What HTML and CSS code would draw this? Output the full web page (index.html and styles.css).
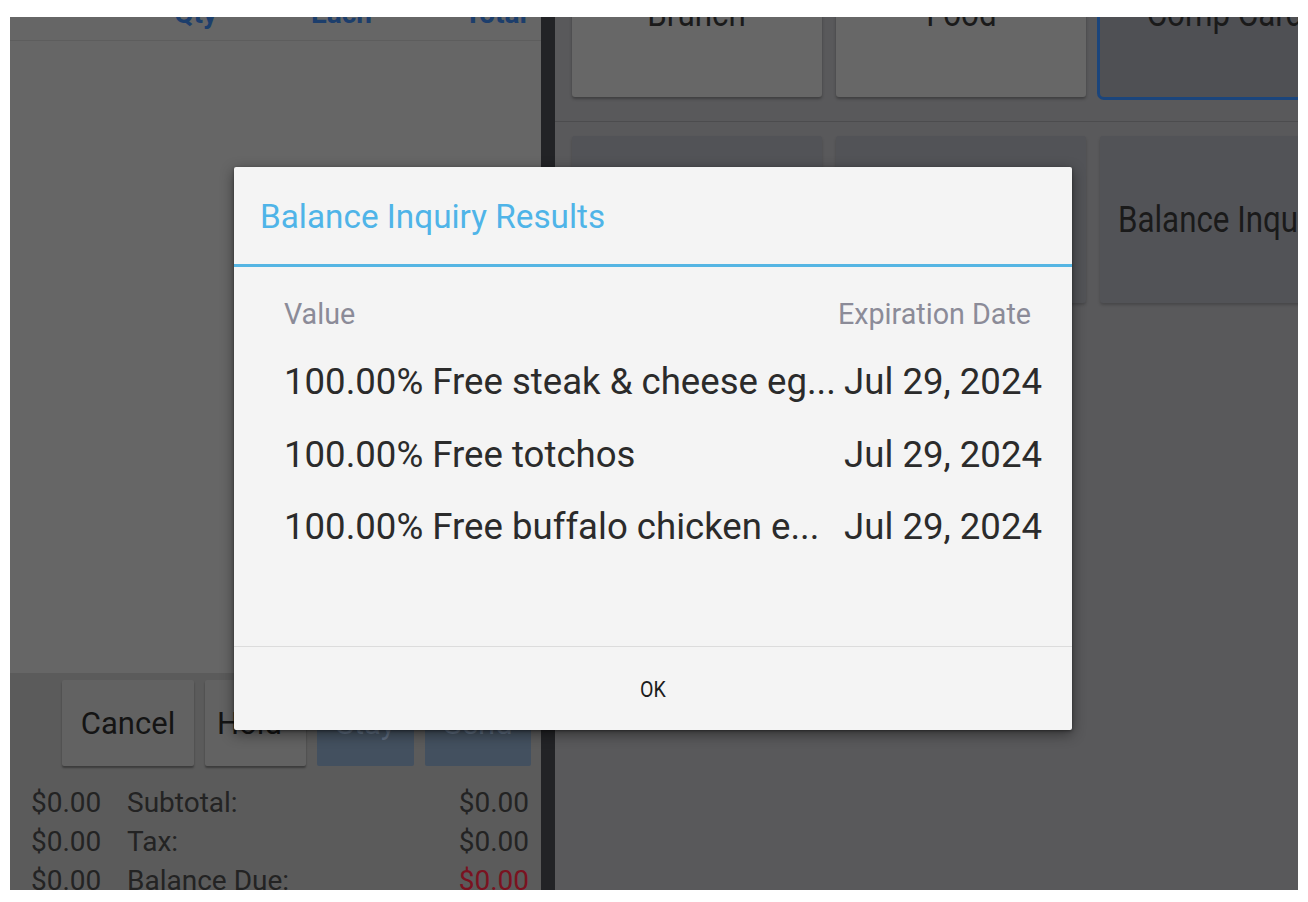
FILE: index.html
```html
<!DOCTYPE html>
<html>
<head>
<meta charset="utf-8">
<link rel="stylesheet" href="styles.css">
</head>
<body>
<div class="screen">
  <section class="order">
    <div class="order-head">
      <span></span><span>Qty</span><span>Each</span><span>Total</span>
    </div>
    <div class="order-items"></div>
    <div class="order-foot">
      <div class="actions">
        <button class="act act-cancel">Cancel</button>
        <button class="act act-hold">Hold</button>
        <button class="act act-blue act-stay">Stay</button>
        <button class="act act-blue act-send">Send</button>
      </div>
      <div class="totals">
        <span>$0.00</span><span>Subtotal:</span><span class="amt">$0.00</span>
        <span>$0.00</span><span>Tax:</span><span class="amt">$0.00</span>
        <span>$0.00</span><span>Balance Due:</span><span class="amt due">$0.00</span>
      </div>
    </div>
  </section>
  <div class="divider"></div>
  <section class="menu">
    <div class="cats">
      <div class="tile tile-cat"><span class="cond">Brunch</span></div>
      <div class="tile tile-cat"><span class="cond">Food</span></div>
      <div class="tile tile-cat tile-selected"><span class="cond">Comp Card</span></div>
    </div>
    <div class="items">
      <div class="tile tile-item"></div>
      <div class="tile tile-item"></div>
      <div class="tile tile-item"><span class="cond">Balance Inquiry</span></div>
    </div>
  </section>

  <div class="dialog">
    <div class="dialog-title">Balance Inquiry Results</div>
    <div class="dialog-body">
      <div class="result-head">
        <span>Value</span><span class="h-date">Expiration Date</span>
      </div>
      <div class="result-row">
        <span class="val">100.00% Free steak &amp; cheese eg...</span><span class="date">Jul 29, 2024</span>
      </div>
      <div class="result-row">
        <span class="val">100.00% Free totchos</span><span class="date">Jul 29, 2024</span>
      </div>
      <div class="result-row">
        <span class="val">100.00% Free buffalo chicken e...</span><span class="date">Jul 29, 2024</span>
      </div>
    </div>
    <div class="dialog-foot">
      <button class="ok"><span class="cond">OK</span></button>
    </div>
  </div>
</div>
</body>
</html>
```

FILE: styles.css
```css
* { box-sizing: border-box; }

html, body {
  margin: 0;
  padding: 0;
  background: #ffffff;
}

body {
  padding: 17px 10px 12px 10px;
  font-family: Roboto, "Noto Sans", "Liberation Sans", sans-serif;
}

.screen {
  position: relative;
  width: 1288px;
  height: 873px;
  display: flex;
  overflow: hidden;
  background: #59595b;
}

/* ---------- left: order panel ---------- */
.order {
  width: 531px;
  flex: 0 0 531px;
  display: flex;
  flex-direction: column;
  background: #666666;
}

.order-head {
  height: 24px;
  border-bottom: 1px solid #5d5d5d;
  display: grid;
  grid-template-columns: 52px 155px 155px 155px;
  padding-right: 14px;
  overflow: hidden;
}

.order-head span {
  text-align: right;
  font-weight: 700;
  font-size: 28px;
  line-height: 28px;
  margin-top: -17px;
  color: #1c3e6c;
}

.order-items {
  flex: 1;
}

.order-foot {
  height: 217px;
  flex: 0 0 217px;
  background: #5b5b5b;
  padding-top: 7px;
}

.actions {
  display: flex;
  gap: 11px;
  padding-left: 52px;
  height: 86px;
}

.act {
  border: none;
  margin: 0;
  padding: 0;
  height: 86px;
  border-radius: 2px;
  font-family: Roboto, "Noto Sans", sans-serif;
  font-size: 31px;
  color: #141414;
  background: #626262;
  box-shadow: 0 2px 2px rgba(0, 0, 0, 0.35);
}

.act-cancel { width: 132px; }
.act-hold { width: 101px; padding-right: 12px; }
.act-stay { width: 97px; }
.act-send { width: 106px; }

.act-blue {
  background: #43505f;
  color: #5f6d80;
  box-shadow: none;
}

.totals {
  margin-top: 17px;
  display: grid;
  grid-template-columns: 96px 1fr auto;
  padding: 0 12px 0 21px;
  font-size: 28px;
  line-height: 39px;
  color: #232323;
}

.totals .amt { text-align: right; }
.totals .due { color: #7a1220; }

.divider {
  width: 14px;
  flex: 0 0 14px;
  background: #222326;
}

/* ---------- right: menu ---------- */
.menu {
  flex: 1;
  min-width: 0;
  overflow: hidden;
  background: #59595b;
}

.cats {
  display: flex;
  gap: 14px;
  margin-top: -87px;
  padding: 0 0 24px 17px;
  border-bottom: 1px solid #4c4c4e;
}

.items {
  display: flex;
  gap: 14px;
  padding: 14px 0 0 17px;
}

.tile {
  flex: 0 0 250px;
  width: 250px;
  height: 167px;
  border-radius: 3px;
  display: flex;
  align-items: center;
  justify-content: center;
  white-space: nowrap;
  font-size: 36px;
  color: #1a1a1a;
}

.tile-cat {
  background: #676767;
  box-shadow: 0 2px 3px rgba(0, 0, 0, 0.3);
}

.tile-selected {
  background: #4f5054;
  box-shadow: 0 0 0 3px #1b457c;
  border-radius: 4px;
}

.tile-item {
  background: #525357;
  box-shadow: 0 2px 3px rgba(0, 0, 0, 0.2);
}

.cond {
  display: inline-block;
  transform: scaleX(0.87);
  white-space: nowrap;
}

/* ---------- dialog ---------- */
.dialog {
  position: absolute;
  left: 224px;
  top: 150px;
  width: 838px;
  height: 563px;
  background: #f4f4f4;
  border-radius: 2px;
  box-shadow: 0 4px 14px rgba(0, 0, 0, 0.45), 0 1px 3px rgba(0, 0, 0, 0.4);
  display: flex;
  flex-direction: column;
}

.dialog-title {
  height: 100px;
  flex: 0 0 100px;
  padding: 0 0 0 26px;
  font-size: 33.3px;
  line-height: 100px;
  color: #4fb4e8;
  border-bottom: 3px solid #55b5e3;
}

.dialog-body {
  height: 379px;
  flex: 0 0 379px;
  padding: 27px 30px 0 50px;
}

.result-head {
  display: flex;
  justify-content: space-between;
  padding-right: 11px;
  font-size: 28.7px;
  line-height: 40px;
  color: #8b8b98;
  margin-bottom: 12px;
}

.result-row {
  display: grid;
  grid-template-columns: 1fr auto;
  column-gap: 10px;
  font-size: 36.6px;
  line-height: 72.5px;
  height: 72.5px;
  color: #2b2b2b;
}

.result-row .val {
  white-space: nowrap;
  overflow: hidden;
}

.result-row .date {
  white-space: nowrap;
}

.dialog-foot {
  flex: 1;
  border-top: 1px solid #dcdcdc;
  display: flex;
  align-items: center;
  justify-content: center;
}

.ok {
  border: none;
  background: transparent;
  padding: 8px 30px;
  margin: 0;
  font-family: Roboto, "Noto Sans", sans-serif;
  font-size: 22.5px;
  color: #1c1c1c;
}
```
